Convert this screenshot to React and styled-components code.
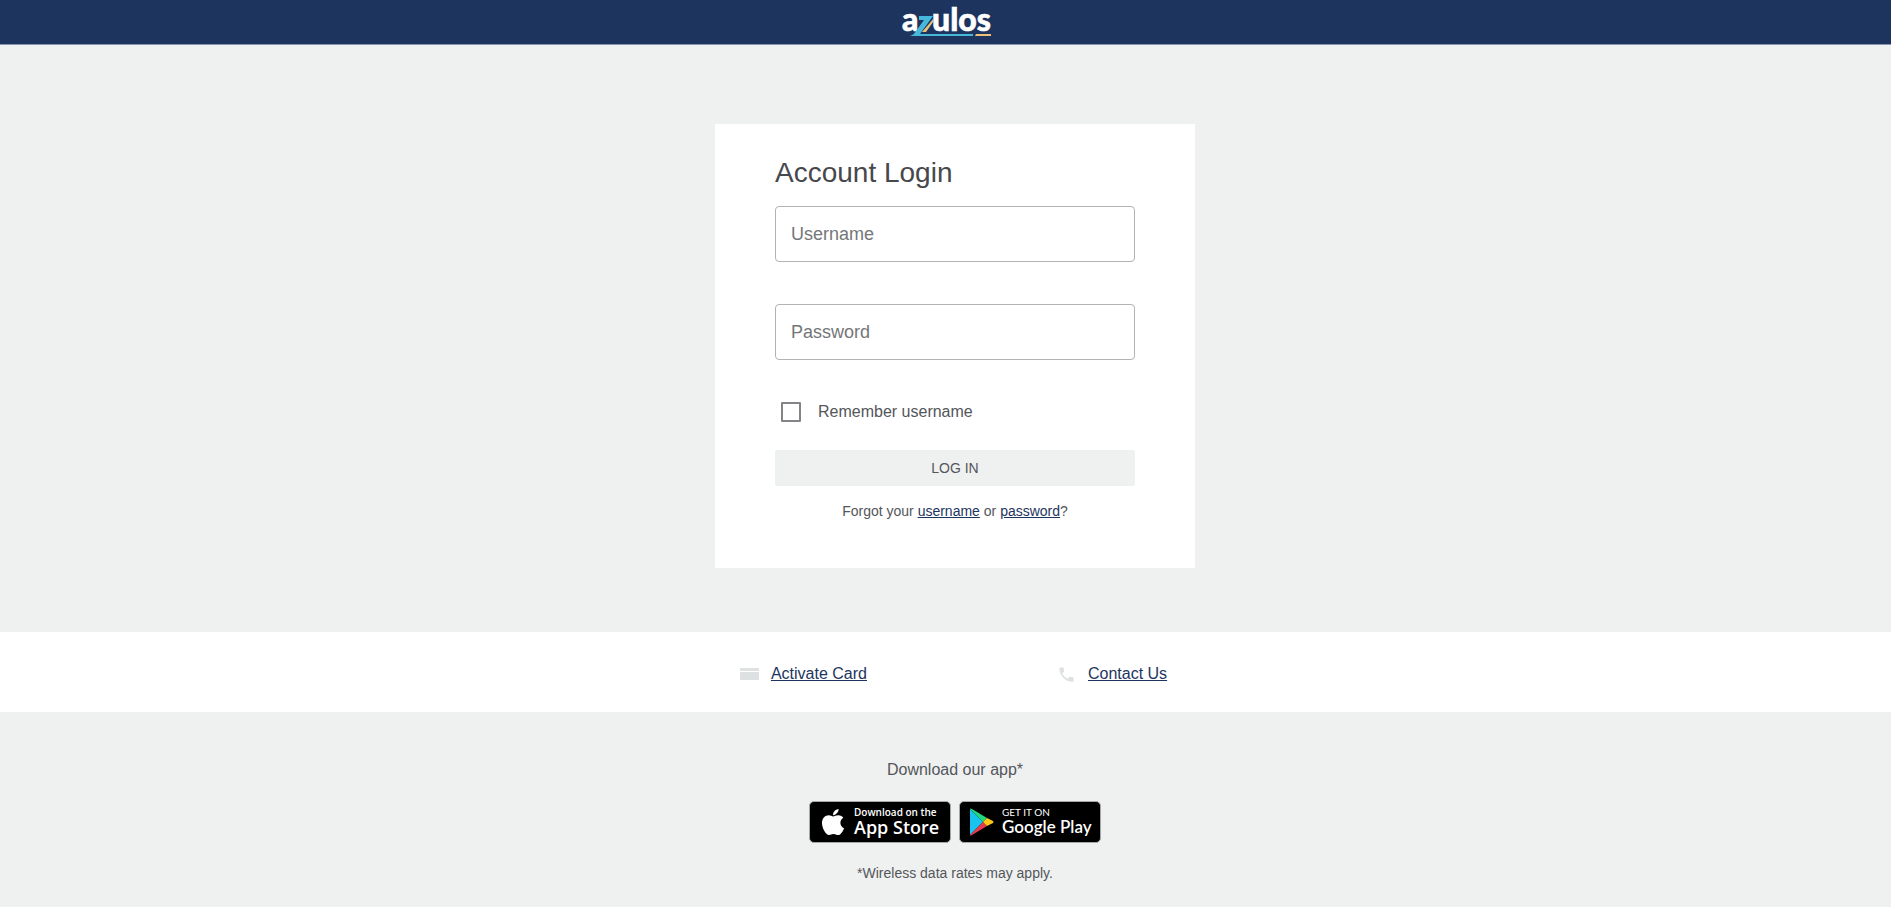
import { useState } from 'react';
import styled, { createGlobalStyle } from 'styled-components';
import { FaApple } from 'react-icons/fa';
import { MdPhone } from 'react-icons/md';

const GlobalStyle = createGlobalStyle`
  *, *::before, *::after {
    box-sizing: border-box;
  }

  body {
    margin: 0;
    background: #eff1f1;
    color: #54565a;
    font-family: 'Liberation Sans', Arial, sans-serif;
    font-size: 16px;
    line-height: 20px;
  }
`;

const Header = styled.header`
  display: flex;
  justify-content: center;
  height: 45px;
  background: #1d355e;
  border-bottom: 1px solid #8695ad;
`;

const HomeLink = styled.a`
  display: block;
  height: 44px;
  padding-left: 2px;

  svg {
    display: block;
  }
`;

const Main = styled.main`
  padding-left: 19px;
`;

const LoginSection = styled.section`
  padding: 79px 0 64px;
`;

const Card = styled.form`
  display: flex;
  flex-direction: column;
  max-width: 480px;
  margin: 0 auto;
  padding: 33px 60px 47px;
  background: #fff;
`;

const Title = styled.h1`
  margin: 0 0 17px;
  color: #46484b;
  font-size: 28px;
  font-weight: normal;
  line-height: 32px;
`;

const Field = styled.input`
  width: 100%;
  height: 56px;
  margin-bottom: 42px;
  padding: 0 15px;
  border: 1px solid #b0b2b4;
  border-radius: 4px;
  background: #fff;
  color: #46484b;
  font-family: inherit;
  font-size: 18px;

  &::placeholder {
    color: #747678;
    opacity: 1;
  }
`;

const Remember = styled.label`
  display: flex;
  align-items: center;
  gap: 17px;
  margin-bottom: 28px;
  padding-left: 6px;
`;

const Checkbox = styled.input`
  appearance: none;
  width: 20px;
  height: 20px;
  margin: 0;
  border: 2px solid #828487;
  border-radius: 1px;
  background: #fff;

  &:checked {
    background: #1d355e;
    border-color: #1d355e;
  }
`;

const LoginButton = styled.button`
  height: 36px;
  margin-bottom: 15px;
  border: 0;
  border-radius: 2px;
  background: #eff1f1;
  color: #54565a;
  font-family: inherit;
  font-size: 14px;
`;

const Note = styled.p`
  margin: 0;
  font-size: 14px;
  line-height: 20px;
  text-align: center;
`;

const TextLink = styled.a`
  color: #1d355e;
  text-decoration: underline;
`;

const QuickLinks = styled.nav`
  display: flex;
  justify-content: center;
  align-items: center;
  gap: 190px;
  height: 80px;
  margin-left: -19px;
  padding-left: 16px;
  padding-top: 4px;
  background: #fff;
`;

const QuickLink = styled.span`
  display: flex;
  align-items: center;
  gap: 12px;

  svg {
    color: #dde1e2;
  }
`;

const Download = styled.section`
  display: flex;
  flex-direction: column;
  align-items: center;
  padding: 48px 0 24px;
`;

const DownloadTitle = styled.p`
  margin: 0 0 21px;
  line-height: 20px;
`;

const Badges = styled.div`
  display: flex;
  gap: 8px;
  margin-bottom: 20px;
`;

const Badge = styled.a`
  display: flex;
  align-items: center;
  gap: ${(props) => (props.$store === 'google' ? '8px' : '6px')};
  width: 142px;
  height: 42px;
  padding-left: ${(props) => (props.$store === 'google' ? '9px' : '8px')};
  border: 1px solid #a6a6a6;
  border-radius: 5px;
  background: #000;
  color: #fff;
  text-decoration: none;
  white-space: nowrap;

  svg {
    flex: none;
  }
`;

const BadgeText = styled.span`
  display: flex;
  flex-direction: column;
  padding-bottom: 3px;
  font-family: ${(props) => (props.$store === 'google' ? 'Lato' : "'Open Sans'")}, sans-serif;
`;

const BadgeSmall = styled.span`
  font-size: 10px;
  font-weight: ${(props) => (props.$store === 'google' ? 400 : 600)};
  line-height: 12px;
`;

const BadgeName = styled.span`
  font-size: ${(props) => (props.$store === 'google' ? '17px' : '18px')};
  font-weight: 600;
  line-height: 18px;
`;

const Logo = () => (
  <svg width="92" height="44" viewBox="0 0 92 44" role="img" aria-label="azulos">
    <g
      fill="#fff"
      stroke="#fff"
      strokeWidth="0.6"
      fontFamily="Lato, sans-serif"
      fontWeight="900"
      fontSize="32"
    >
      <text x="1" y="31">a</text>
      <text x="31" y="31">ulos</text>
    </g>
    <path d="M18 16H32L19 34H72V36H9Q13 35 15 31L23 20H18Z" fill="#45b8dc" />
    <path d="M28 24L32 19V22L25 32H21Z" fill="#efc078" />
    <path d="M75 34H90V36H74Z" fill="#efc078" />
  </svg>
);

const CardIcon = () => (
  <svg width="19" height="12" viewBox="0 0 19 12" aria-hidden="true">
    <path d="M1 0H18Q19 0 19 1V3H0V1Q0 0 1 0ZM0 4H19V11Q19 12 18 12H1Q0 12 0 11Z" fill="#dde1e2" />
  </svg>
);

const PlayIcon = () => (
  <svg width="25" height="28" viewBox="0 0 25 28" aria-hidden="true">
    <path d="M1 1V27L14 14Z" fill="#19c3ef" />
    <path d="M1 1Q1 0 3 1L18 10L14 14Z" fill="#22d77e" />
    <path d="M1 27Q1 28 3 27L18 18L14 14Z" fill="#e83a4e" />
    <path d="M18 10L24 13Q25 14 24 15L18 18L14 14Z" fill="#fdc71a" />
  </svg>
);

const App = () => {
  const [remember, setRemember] = useState(false);

  const handleSubmit = (e) => {
    e.preventDefault();
  };

  return (
    <>
      <GlobalStyle />
      <Header>
        <HomeLink href="#home">
          <Logo />
        </HomeLink>
      </Header>
      <Main>
        <LoginSection>
          <Card onSubmit={handleSubmit}>
            <Title>Account Login</Title>
            <Field type="text" placeholder="Username" aria-label="Username" />
            <Field type="password" placeholder="Password" aria-label="Password" />
            <Remember>
              <Checkbox
                type="checkbox"
                checked={remember}
                onChange={(e) => setRemember(e.target.checked)}
              />
              <span>Remember username</span>
            </Remember>
            <LoginButton type="submit">LOG IN</LoginButton>
            <Note>
              Forgot your <TextLink href="#username">username</TextLink> or{' '}
              <TextLink href="#password">password</TextLink>?
            </Note>
          </Card>
        </LoginSection>
        <QuickLinks>
          <QuickLink>
            <CardIcon />
            <TextLink href="#activate">Activate Card</TextLink>
          </QuickLink>
          <QuickLink>
            <MdPhone size={19} />
            <TextLink href="#contact">Contact Us</TextLink>
          </QuickLink>
        </QuickLinks>
        <Download>
          <DownloadTitle>Download our app*</DownloadTitle>
          <Badges>
            <Badge href="#app-store" $store="apple">
              <FaApple size={30} />
              <BadgeText $store="apple">
                <BadgeSmall $store="apple">Download on the</BadgeSmall>
                <BadgeName $store="apple">App Store</BadgeName>
              </BadgeText>
            </Badge>
            <Badge href="#google-play" $store="google">
              <PlayIcon />
              <BadgeText $store="google">
                <BadgeSmall $store="google">GET IT ON</BadgeSmall>
                <BadgeName $store="google">Google Play</BadgeName>
              </BadgeText>
            </Badge>
          </Badges>
          <Note>*Wireless data rates may apply.</Note>
        </Download>
      </Main>
    </>
  );
};

export default App;
